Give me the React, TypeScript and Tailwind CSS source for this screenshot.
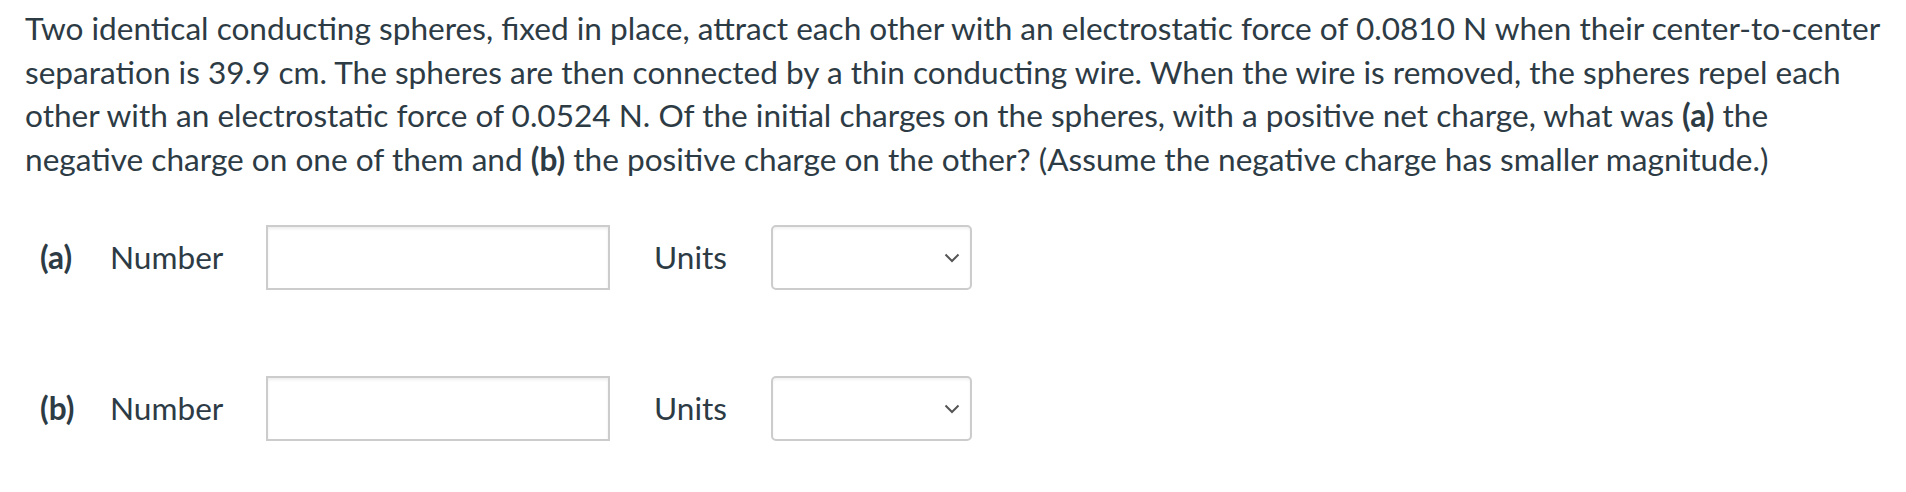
import React from "react";

function Chevron() {
  return (
    <svg width="16" height="10" viewBox="0 0 16 10" className="absolute right-[10px] top-1/2 -translate-y-1/2">
      <path d="M1.5 1.5 L8 8 L14.5 1.5" fill="none" stroke="#555" strokeWidth="2" />
    </svg>
  );
}

function Row({ label, mt }: { label: string; mt: string }) {
  return (
    <div className={`flex items-center h-[65px] pl-[40px] text-[31.6px] ${mt}`}>
      <span className="font-bold w-[70px] whitespace-nowrap">{label}</span>
      <span className="w-[156px] whitespace-nowrap">Number</span>
      <div className="w-[344px] h-[65px] border-2 border-[#cccccc] bg-white shadow-[inset_0_2px_3px_rgba(0,0,0,0.07)]" />
      <span className="ml-[44px] w-[117px] whitespace-nowrap">Units</span>
      <div className="relative w-[201px] h-[65px] border-2 border-[#cccccc] rounded-[5px] bg-white shadow-[inset_0_2px_3px_rgba(0,0,0,0.05)]">
        <Chevron />
      </div>
    </div>
  );
}

export default function App() {
  return (
    <div className="w-[1906px] h-[492px] bg-white text-[#2d3b45] font-['Lato',sans-serif] leading-[43.5px] overflow-hidden">
      <p className="pl-[25px] pt-[7px] whitespace-nowrap text-[31.6px]">
        Two identical conducting spheres, fixed in place, attract each other with an electrostatic force of 0.0810 N when their center-to-center
        <br />
        separation is 39.9 cm. The spheres are then connected by a thin conducting wire. When the wire is removed, the spheres repel each
        <br />
        other with an electrostatic force of 0.0524 N. Of the initial charges on the spheres, with a positive net charge, what was <b>(a)</b> the
        <br />
        negative charge on one of them and <b>(b)</b> the positive charge on the other? (Assume the negative charge has smaller magnitude.)
      </p>
      <Row label="(a)" mt="mt-[44px]" />
      <Row label="(b)" mt="mt-[86px]" />
    </div>
  );
}
